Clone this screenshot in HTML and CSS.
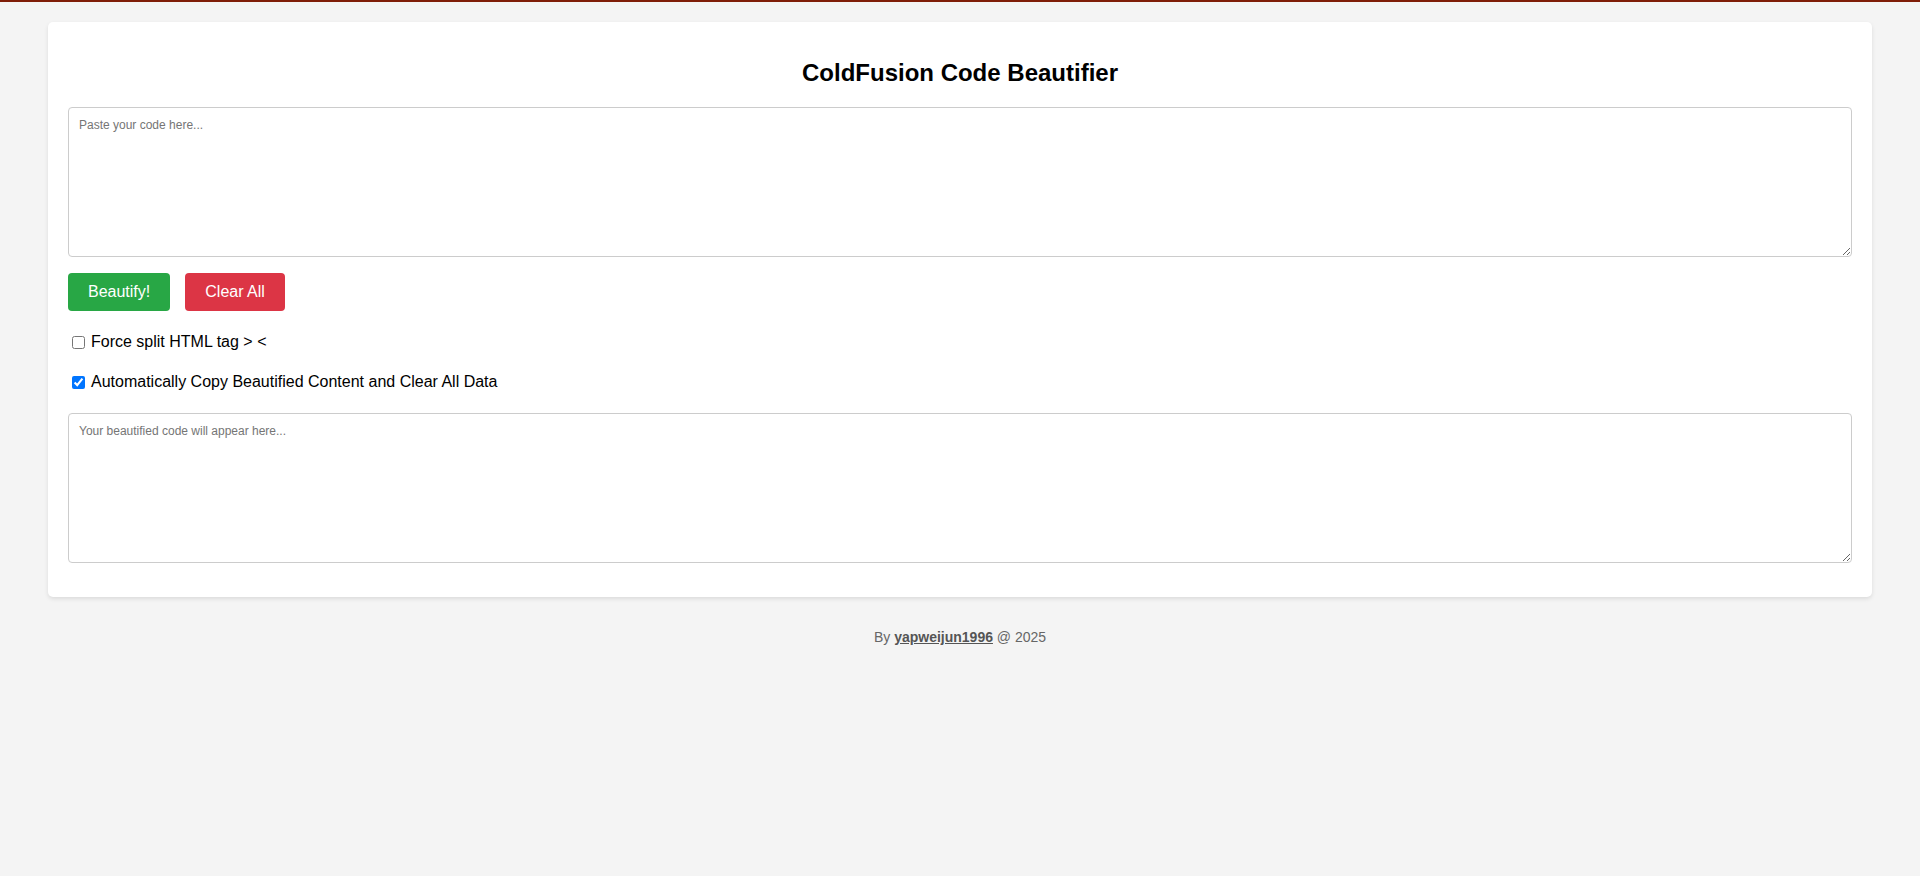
FILE: index.html
```html
<!doctype html>
<html>
  <head>
    <title>ColdFusion Code Beautifier</title>
    <link rel="stylesheet" href="styles.css">
  </head>

  <body>
    <div class="container">
      <h2>ColdFusion Code Beautifier</h2>
      <textarea id="input" class="code_box" placeholder="Paste your code here..."></textarea>

      <div class="buttons">
        <button class="btn btn_green" id="beautify">Beautify!</button>
        <button class="btn btn_red" id="clear">Clear All</button>
      </div>

      <div class="option">
        <label><input type="checkbox" id="force_split">Force split HTML tag &gt; &lt;</label>
      </div>
      <div class="option">
        <label><input type="checkbox" id="auto_copy" checked>Automatically Copy Beautified Content and Clear All Data</label>
      </div>

      <textarea id="output" class="code_box" placeholder="Your beautified code will appear here..."></textarea>
    </div>

    <div class="footer">
      By <a href="#">yapweijun1996</a> @ 2025
    </div>
  </body>
</html>
```

FILE: styles.css
```css
body {
  margin: 0;
  border-top: 2px solid #7f1d08;
  background-color: #f4f4f4;
  font-family: Arial, "Liberation Sans", sans-serif;
}

.container {
  width: 95%;
  margin: 20px auto 0;
  padding: 20px;
  box-sizing: border-box;
  background-color: #fff;
  border-radius: 5px;
  box-shadow: 0 2px 4px rgba(0, 0, 0, 0.1);
}

h2 {
  margin: 17px 0 20px;
  font-size: 24px;
  text-align: center;
  color: #000;
}

.code_box {
  display: block;
  width: 100%;
  height: 150px;
  box-sizing: border-box;
  padding: 10px;
  border: 1px solid #ccc;
  border-radius: 4px;
  font-family: Arial, "Liberation Sans", sans-serif;
  font-size: 12px;
}

.code_box::placeholder {
  color: #757575;
}

#output {
  margin-bottom: 14px;
}

.buttons {
  display: flex;
  gap: 15px;
  margin-top: 16px;
}

.btn {
  padding: 10px 20px;
  border: none;
  border-radius: 4px;
  color: #fff;
  font-family: Arial, "Liberation Sans", sans-serif;
  font-size: 16px;
  cursor: pointer;
}

.btn_green {
  background-color: #28a745;
}

.btn_red {
  background-color: #dc3545;
}

.option {
  margin: 22px 0;
  font-size: 16px;
  line-height: 18px;
}

.option label {
  display: flex;
  align-items: center;
}

.option input {
  width: 13px;
  height: 13px;
  margin: 0 6px 0 4px;
}

.footer {
  margin-top: 32px;
  text-align: center;
  font-size: 14px;
  color: #666;
}

.footer a {
  color: #555;
  font-weight: bold;
}
```
